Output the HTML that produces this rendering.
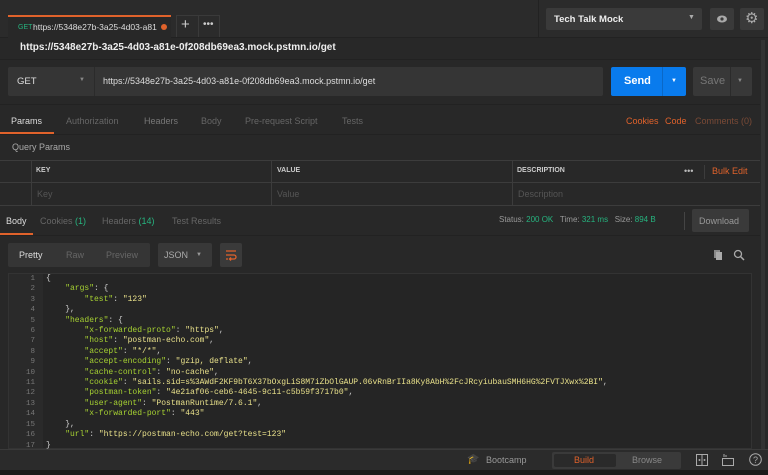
<!DOCTYPE html>
<html><head><style>
*{box-sizing:border-box;margin:0;padding:0}
body{width:768px;height:475px;background:#282828;font-family:"Liberation Sans",sans-serif;font-size:9px;color:#999;position:relative;overflow:hidden}
.a{position:absolute}
.mono{font-family:"Liberation Mono",monospace}
</style></head><body>
<div class="a" style="left:0;top:0;width:768px;height:38px;background:#2b2b2b;border-bottom:1px solid #222"></div>
<div class="a" style="left:538px;top:0;width:1px;height:38px;background:#222"></div>
<div class="a" style="left:8px;top:15px;width:163px;height:24px;background:#282828;border-top:2px solid #e0622b"></div>
<div class="a" style="left:18px;top:24px;font-size:7px;color:#26b47f">GET</div>
<div class="a" style="left:33px;top:22px;font-size:8.5px;color:#ddd">https://5348e27b-3a25-4d03-a81</div>
<div class="a" style="left:161px;top:24px;width:6px;height:6px;border-radius:50%;background:#e0622b"></div>
<div class="a" style="left:176px;top:15px;width:44px;height:22px;border:1px solid #3a3a3a;border-bottom:none"></div>
<div class="a" style="left:198px;top:15px;width:1px;height:22px;background:#3a3a3a"></div>
<div class="a" style="left:181px;top:16px;font-size:15px;color:#ccc">+</div>
<div class="a" style="left:203px;top:19px;font-size:10px;color:#ccc">•••</div>
<div class="a" style="left:546px;top:8px;width:156px;height:22px;background:#3a3a3a;border-radius:2px"></div>
<div class="a" style="left:554px;top:14px;font-size:9.5px;font-weight:bold;color:#eee">Tech Talk Mock</div>
<div class="a" style="left:688px;top:14px;font-size:7px;color:#aaa">▼</div>
<div class="a" style="left:710px;top:8px;width:24px;height:22px;background:#3a3a3a;border-radius:2px"></div>
<svg class="a" style="left:716px;top:14px" width="12" height="10"><ellipse cx="6" cy="5" rx="5" ry="3.5" fill="#aaa"/><circle cx="6" cy="5" r="1.6" fill="#3a3a3a"/></svg>
<div class="a" style="left:740px;top:8px;width:24px;height:22px;background:#3a3a3a;border-radius:2px"></div>
<div class="a" style="left:745px;top:9px;font-size:15px;color:#aaa">⚙</div>
<div class="a" style="left:20px;top:42px;font-size:10px;font-weight:bold;color:#eee">https://5348e27b-3a25-4d03-a81e-0f208db69ea3.mock.pstmn.io/get</div>
<div class="a" style="left:0;top:59px;width:760px;height:1px;background:#222"></div>
<div class="a" style="left:761px;top:40px;width:4px;height:410px;background:#333"></div>
<div class="a" style="left:8px;top:67px;width:595px;height:29px;background:#353535;border-radius:2px"></div>
<div class="a" style="left:94px;top:67px;width:1px;height:29px;background:#2b2b2b"></div>
<div class="a" style="left:17px;top:76px;font-size:9.5px;color:#ddd">GET</div>
<div class="a" style="left:79px;top:77px;font-size:6px;color:#888">▼</div>
<div class="a" style="left:103px;top:76px;font-size:9px;color:#ddd">https://5348e27b-3a25-4d03-a81e-0f208db69ea3.mock.pstmn.io/get</div>
<div class="a" style="left:611px;top:67px;width:75px;height:29px;background:#097bed;border-radius:2px"></div>
<div class="a" style="left:662px;top:67px;width:1px;height:29px;background:#0a68c7"></div>
<div class="a" style="left:624px;top:75px;font-size:11px;font-weight:bold;color:#fff">Send</div>
<div class="a" style="left:671px;top:78px;font-size:6px;color:#fff">▼</div>
<div class="a" style="left:693px;top:67px;width:59px;height:29px;background:#383838;border-radius:2px"></div>
<div class="a" style="left:730px;top:67px;width:1px;height:29px;background:#2b2b2b"></div>
<div class="a" style="left:700px;top:75px;font-size:11px;color:#777">Save</div>
<div class="a" style="left:737px;top:78px;font-size:6px;color:#888">▼</div>
<div class="a" style="left:0;top:104px;width:760px;height:1px;background:#222"></div>
<div class="a" style="left:11px;top:116px;font-size:9px;color:#ddd">Params</div>
<div class="a" style="left:0;top:132px;width:54px;height:2px;background:#e0622b"></div>
<div class="a" style="left:66px;top:116px;color:#666">Authorization</div>
<div class="a" style="left:144px;top:116px;color:#777">Headers</div>
<div class="a" style="left:201px;top:116px;color:#666">Body</div>
<div class="a" style="left:245px;top:116px;color:#666">Pre-request Script</div>
<div class="a" style="left:342px;top:116px;color:#666">Tests</div>
<div class="a" style="left:626px;top:116px;color:#e0622b">Cookies</div>
<div class="a" style="left:665px;top:116px;color:#e0622b">Code</div>
<div class="a" style="left:695px;top:116px;color:#7a4a36">Comments (0)</div>
<div class="a" style="left:0;top:134px;width:760px;height:1px;background:#222"></div>
<div class="a" style="left:12px;top:142px;color:#aaa">Query Params</div>
<div class="a" style="left:0;top:160px;width:760px;height:46px;border-top:1px solid #3c3c3c;border-bottom:1px solid #3c3c3c"></div>
<div class="a" style="left:0;top:182px;width:760px;height:1px;background:#3c3c3c"></div>
<div class="a" style="left:31px;top:160px;width:1px;height:46px;background:#3c3c3c"></div>
<div class="a" style="left:271px;top:160px;width:1px;height:46px;background:#3c3c3c"></div>
<div class="a" style="left:512px;top:160px;width:1px;height:46px;background:#3c3c3c"></div>
<div class="a" style="left:36px;top:167px;font-size:7px;font-weight:bold;color:#ccc">KEY</div>
<div class="a" style="left:277px;top:167px;font-size:7px;font-weight:bold;color:#ccc">VALUE</div>
<div class="a" style="left:517px;top:167px;font-size:7px;font-weight:bold;color:#ccc">DESCRIPTION</div>
<div class="a" style="left:684px;top:166px;color:#bbb">•••</div>
<div class="a" style="left:704px;top:165px;width:1px;height:14px;background:#3c3c3c"></div>
<div class="a" style="left:712px;top:166px;color:#e0622b">Bulk Edit</div>
<div class="a" style="left:37px;top:189px;color:#555">Key</div>
<div class="a" style="left:277px;top:189px;color:#555">Value</div>
<div class="a" style="left:518px;top:189px;color:#555">Description</div>
<div class="a" style="left:6px;top:216px;color:#ddd">Body</div>
<div class="a" style="left:0;top:233px;width:33px;height:2px;background:#e0622b"></div>
<div class="a" style="left:40px;top:216px;color:#666">Cookies <span style="color:#26b47f">(1)</span></div>
<div class="a" style="left:102px;top:216px;color:#666">Headers <span style="color:#26b47f">(14)</span></div>
<div class="a" style="left:172px;top:216px;color:#666">Test Results</div>
<div class="a" style="left:499px;top:215px;font-size:8px;color:#999">Status: <span style="color:#26b47f">200 OK</span>&nbsp;&nbsp;&nbsp;Time: <span style="color:#26b47f">321 ms</span>&nbsp;&nbsp;&nbsp;Size: <span style="color:#26b47f">894 B</span></div>
<div class="a" style="left:684px;top:212px;width:1px;height:18px;background:#444"></div>
<div class="a" style="left:692px;top:209px;width:57px;height:23px;background:#3a3a3a;border-radius:2px"></div>
<div class="a" style="left:699px;top:216px;color:#999">Download</div>
<div class="a" style="left:0;top:235px;width:760px;height:1px;background:#222"></div>
<div class="a" style="left:8px;top:243px;width:142px;height:24px;background:#353535;border-radius:2px"></div>
<div class="a" style="left:19px;top:250px;color:#ddd">Pretty</div>
<div class="a" style="left:66px;top:250px;color:#666">Raw</div>
<div class="a" style="left:106px;top:250px;color:#666">Preview</div>
<div class="a" style="left:158px;top:243px;width:54px;height:24px;background:#383838;border-radius:2px"></div>
<div class="a" style="left:164px;top:250px;color:#aaa">JSON</div>
<div class="a" style="left:196px;top:252px;font-size:6px;color:#999">▼</div>
<div class="a" style="left:220px;top:243px;width:22px;height:24px;background:#3a3a3a;border-radius:2px"></div>
<svg class="a" style="left:224px;top:248px" width="14" height="14"><path d="M2 3H12M2 7H10a2 2 0 0 1 0 4H6M2 11H4M7 9.5L5.5 11L7 12.5" stroke="#e0622b" stroke-width="1.3" fill="none"/></svg>
<svg class="a" style="left:713px;top:249px" width="10" height="12"><rect x="1" y="1" width="6" height="8" fill="#888"/><rect x="3" y="3" width="6" height="8" fill="#aaa"/></svg>
<svg class="a" style="left:733px;top:249px" width="12" height="12"><circle cx="5" cy="5" r="3.5" stroke="#aaa" stroke-width="1.3" fill="none"/><path d="M7.5 7.5L11 11" stroke="#aaa" stroke-width="1.5"/></svg>
<div class="a" style="left:8px;top:273px;width:744px;height:176px;background:#252525;border:1px solid #333"></div>
<div class="a" style="left:9px;top:274px;width:34px;height:174px;background:#2a2a2a"></div>
<div class="a mono" style="left:9px;top:274px;width:34px;font-size:7.5px;line-height:10.4px;color:#777;text-align:right;padding-right:8px">1<br>2<br>3<br>4<br>5<br>6<br>7<br>8<br>9<br>10<br>11<br>12<br>13<br>14<br>15<br>16<br>17</div>
<div class="a mono" style="left:46px;top:274px;width:705px;overflow:hidden;white-space:pre;font-size:8px;line-height:10.4px;color:#ccc">{
    <span style="color:#a6d132">"args"</span>: {
        <span style="color:#a6d132">"test"</span>: <span style="color:#e8e08a">"123"</span>
    },
    <span style="color:#a6d132">"headers"</span>: {
        <span style="color:#a6d132">"x-forwarded-proto"</span>: <span style="color:#e8e08a">"https"</span>,
        <span style="color:#a6d132">"host"</span>: <span style="color:#e8e08a">"postman-echo.com"</span>,
        <span style="color:#a6d132">"accept"</span>: <span style="color:#e8e08a">"*/*"</span>,
        <span style="color:#a6d132">"accept-encoding"</span>: <span style="color:#e8e08a">"gzip, deflate"</span>,
        <span style="color:#a6d132">"cache-control"</span>: <span style="color:#e8e08a">"no-cache"</span>,
        <span style="color:#a6d132">"cookie"</span>: <span style="color:#e8e08a">"sails.sid=s%3AWdF2KF9bT6X37bOxgLiS8M7iZbOlGAUP.06vRnBrIIa8Ky8AbH%2FcJRcyiubauSMH6HG%2FVTJXwx%2BI"</span>,
        <span style="color:#a6d132">"postman-token"</span>: <span style="color:#e8e08a">"4e21af06-ceb6-4645-9c11-c5b59f3717b0"</span>,
        <span style="color:#a6d132">"user-agent"</span>: <span style="color:#e8e08a">"PostmanRuntime/7.6.1"</span>,
        <span style="color:#a6d132">"x-forwarded-port"</span>: <span style="color:#e8e08a">"443"</span>
    },
    <span style="color:#a6d132">"url"</span>: <span style="color:#e8e08a">"https://postman-echo.com/get?test=123"</span>
}</div>
<div class="a" style="left:0;top:449px;width:768px;height:21px;background:#2b2b2b;border-top:1px solid #3a3a3a"></div>
<div class="a" style="left:0;top:470px;width:768px;height:5px;background:#1a1a1a"></div>
<div class="a" style="left:467px;top:454px;font-size:10px;color:#999">🎓</div>
<div class="a" style="left:486px;top:455px;color:#999">Bootcamp</div>
<div class="a" style="left:552px;top:452px;width:129px;height:17px;background:#3a3a3a;border-radius:2px"></div>
<div class="a" style="left:554px;top:454px;width:62px;height:13px;background:#2a2a2a;border-radius:2px"></div>
<div class="a" style="left:574px;top:455px;color:#e0622b">Build</div>
<div class="a" style="left:632px;top:455px;color:#888">Browse</div>
<svg class="a" style="left:696px;top:454px" width="12" height="12"><rect x="0.5" y="0.5" width="11" height="11" fill="none" stroke="#aaa"/><path d="M6 0V12" stroke="#aaa"/><circle cx="3.5" cy="6" r="1" fill="#aaa"/><circle cx="8.5" cy="6" r="1" fill="#aaa"/></svg>
<svg class="a" style="left:722px;top:453px" width="12" height="13"><rect x="0.5" y="5.5" width="11" height="7" fill="none" stroke="#aaa"/><path d="M2 1V4M4 2V4" stroke="#aaa"/></svg>
<svg class="a" style="left:749px;top:453px" width="13" height="13"><circle cx="6.5" cy="6.5" r="5.8" fill="none" stroke="#aaa"/><text x="4" y="10" font-size="9" fill="#aaa" font-family="Liberation Sans">?</text></svg>
</body></html>
